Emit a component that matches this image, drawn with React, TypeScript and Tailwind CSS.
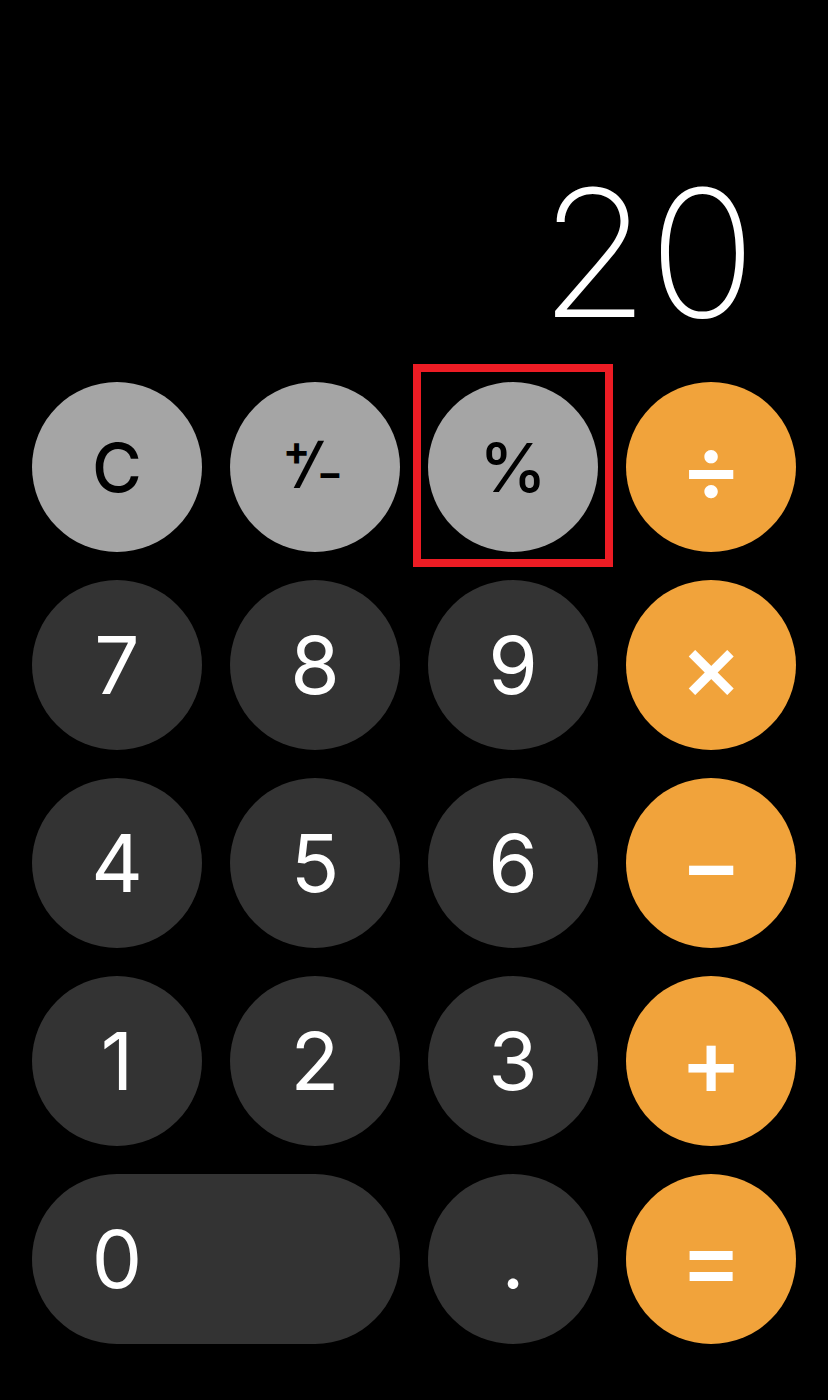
import React from "react";

type Kind = "fn" | "num" | "op";

const base =
  "flex items-center justify-center rounded-full h-[170px] select-none";
const kindCls: Record<Kind, string> = {
  fn: "bg-[#a5a5a5] text-black",
  num: "bg-[#333333] text-white",
  op: "bg-[#f1a33b] text-white",
};

function Key({
  kind,
  children,
  wide = false,
  className = "",
}: {
  kind: Kind;
  children: React.ReactNode;
  wide?: boolean;
  className?: string;
}) {
  return (
    <div
      className={`${base} ${kindCls[kind]} ${
        wide ? "col-span-2 w-[368px] justify-start" : "w-[170px]"
      } ${className}`}
    >
      {children}
    </div>
  );
}

const num = "text-[80px] leading-none font-normal";
const fnText = "text-[68px] leading-none font-medium";
const opText = "text-[94px] leading-none font-medium";

export default function App() {
  return (
    <div
      className="min-h-[1400px] w-full bg-black flex flex-col justify-end pb-[56px]"
      style={{ fontFamily: "Inter, 'Noto Sans', sans-serif" }}
    >
      <div className="pr-[72px] text-right text-white text-[177px] leading-none font-extralight mb-[40px]">
        20
      </div>
      <div className="grid grid-cols-[repeat(4,170px)] gap-[28px] px-[32px]">
        <Key kind="fn">
          <span className={fnText}>C</span>
        </Key>
        <Key kind="fn">
          <span className="relative block w-[54px] h-[50px] ml-[-2px]">
            <span className="absolute left-[-4px] top-[-11px] text-[40px] leading-none font-bold">
              +
            </span>
            <span className="absolute left-[12px] top-[-6px] text-[54px] leading-none font-semibold skew-x-[-14deg]">
              /
            </span>
            <span className="absolute left-[30px] top-[12px] text-[38px] leading-none font-bold">
              −
            </span>
          </span>
        </Key>
        <div className="relative">
          <Key kind="fn">
            <span className={fnText}>%</span>
          </Key>
          <div className="pointer-events-none absolute left-[-15px] top-[-18px] w-[200px] h-[203px] border-[8px] border-[#ed1c24]" />
        </div>
        <Key kind="op">
          <span className={opText}>÷</span>
        </Key>

        <Key kind="num">
          <span className={num}>7</span>
        </Key>
        <Key kind="num">
          <span className={num}>8</span>
        </Key>
        <Key kind="num">
          <span className={num}>9</span>
        </Key>
        <Key kind="op">
          <span className={opText}>×</span>
        </Key>

        <Key kind="num">
          <span className={num}>4</span>
        </Key>
        <Key kind="num">
          <span className={num}>5</span>
        </Key>
        <Key kind="num">
          <span className={num}>6</span>
        </Key>
        <Key kind="op">
          <span className={opText}>−</span>
        </Key>

        <Key kind="num">
          <span className={num}>1</span>
        </Key>
        <Key kind="num">
          <span className={num}>2</span>
        </Key>
        <Key kind="num">
          <span className={num}>3</span>
        </Key>
        <Key kind="op">
          <span className={opText}>+</span>
        </Key>

        <Key kind="num" wide>
          <span className={`${num} w-[170px] text-center`}>0</span>
        </Key>
        <Key kind="num">
          <span className={num}>.</span>
        </Key>
        <Key kind="op">
          <span className={opText}>=</span>
        </Key>
      </div>
    </div>
  );
}
